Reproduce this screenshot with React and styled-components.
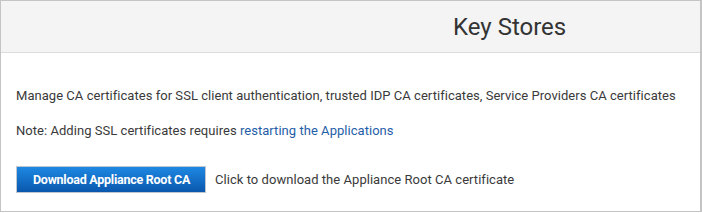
import React from "react";
import styled, { createGlobalStyle } from "styled-components";

const GlobalStyle = createGlobalStyle`
  html, body {
    margin: 0;
    padding: 0;
    background: #fff;
  }
  body {
    font-family: Roboto, "Liberation Sans", sans-serif;
  }
`;

const Panel = styled.div`
  width: 702px;
  height: 212px;
  box-sizing: border-box;
  border: 1px solid #c4c4c4;
  border-right-width: 2px;
  display: flex;
  flex-direction: column;
`;

const Header = styled.div`
  height: 51px;
  background: #f4f4f4;
  border-bottom: 1px solid #dcdcdc;
  display: flex;
  align-items: center;
  padding-left: 452px;
`;

const Title = styled.h1`
  margin: 0;
  font-size: 24px;
  font-weight: 400;
  color: #333;
`;

const Body = styled.div`
  padding: 35px 15px 0;
  display: flex;
  flex-direction: column;
`;

const Text = styled.p`
  margin: 0 0 ${(p) => p.gap || 0}px;
  font-size: 13px;
  line-height: 16px;
  letter-spacing: 0.04px;
  color: #3a3a3a;
`;

const Link = styled.a`
  color: #1f5ea8;
  text-decoration: none;
`;

const ActionRow = styled.div`
  display: flex;
  align-items: center;
  gap: 9px;
`;

const Button = styled.button`
  box-sizing: border-box;
  height: 27px;
  padding: 0 15px 0 16px;
  border: 1px solid #bfc6cf;
  background: linear-gradient(#1e88e2, #0a57ad);
  color: #fff;
  font-family: Roboto, "Liberation Sans", sans-serif;
  font-size: 12.5px;
  font-weight: 700;
  letter-spacing: -0.25px;
  cursor: pointer;
`;

export default function App() {
  return (
    <>
      <GlobalStyle />
      <Panel>
        <Header>
          <Title>Key Stores</Title>
        </Header>
        <Body>
          <Text gap={19}>
            Manage CA certificates for SSL client authentication, trusted IDP CA
            certificates, Service Providers CA certificates
          </Text>
          <Text gap={27}>
            Note: Adding SSL certificates requires{" "}
            <Link href="#">restarting the Applications</Link>
          </Text>
          <ActionRow>
            <Button>Download Appliance Root CA</Button>
            <Text>Click to download the Appliance Root CA certificate</Text>
          </ActionRow>
        </Body>
      </Panel>
    </>
  );
}
